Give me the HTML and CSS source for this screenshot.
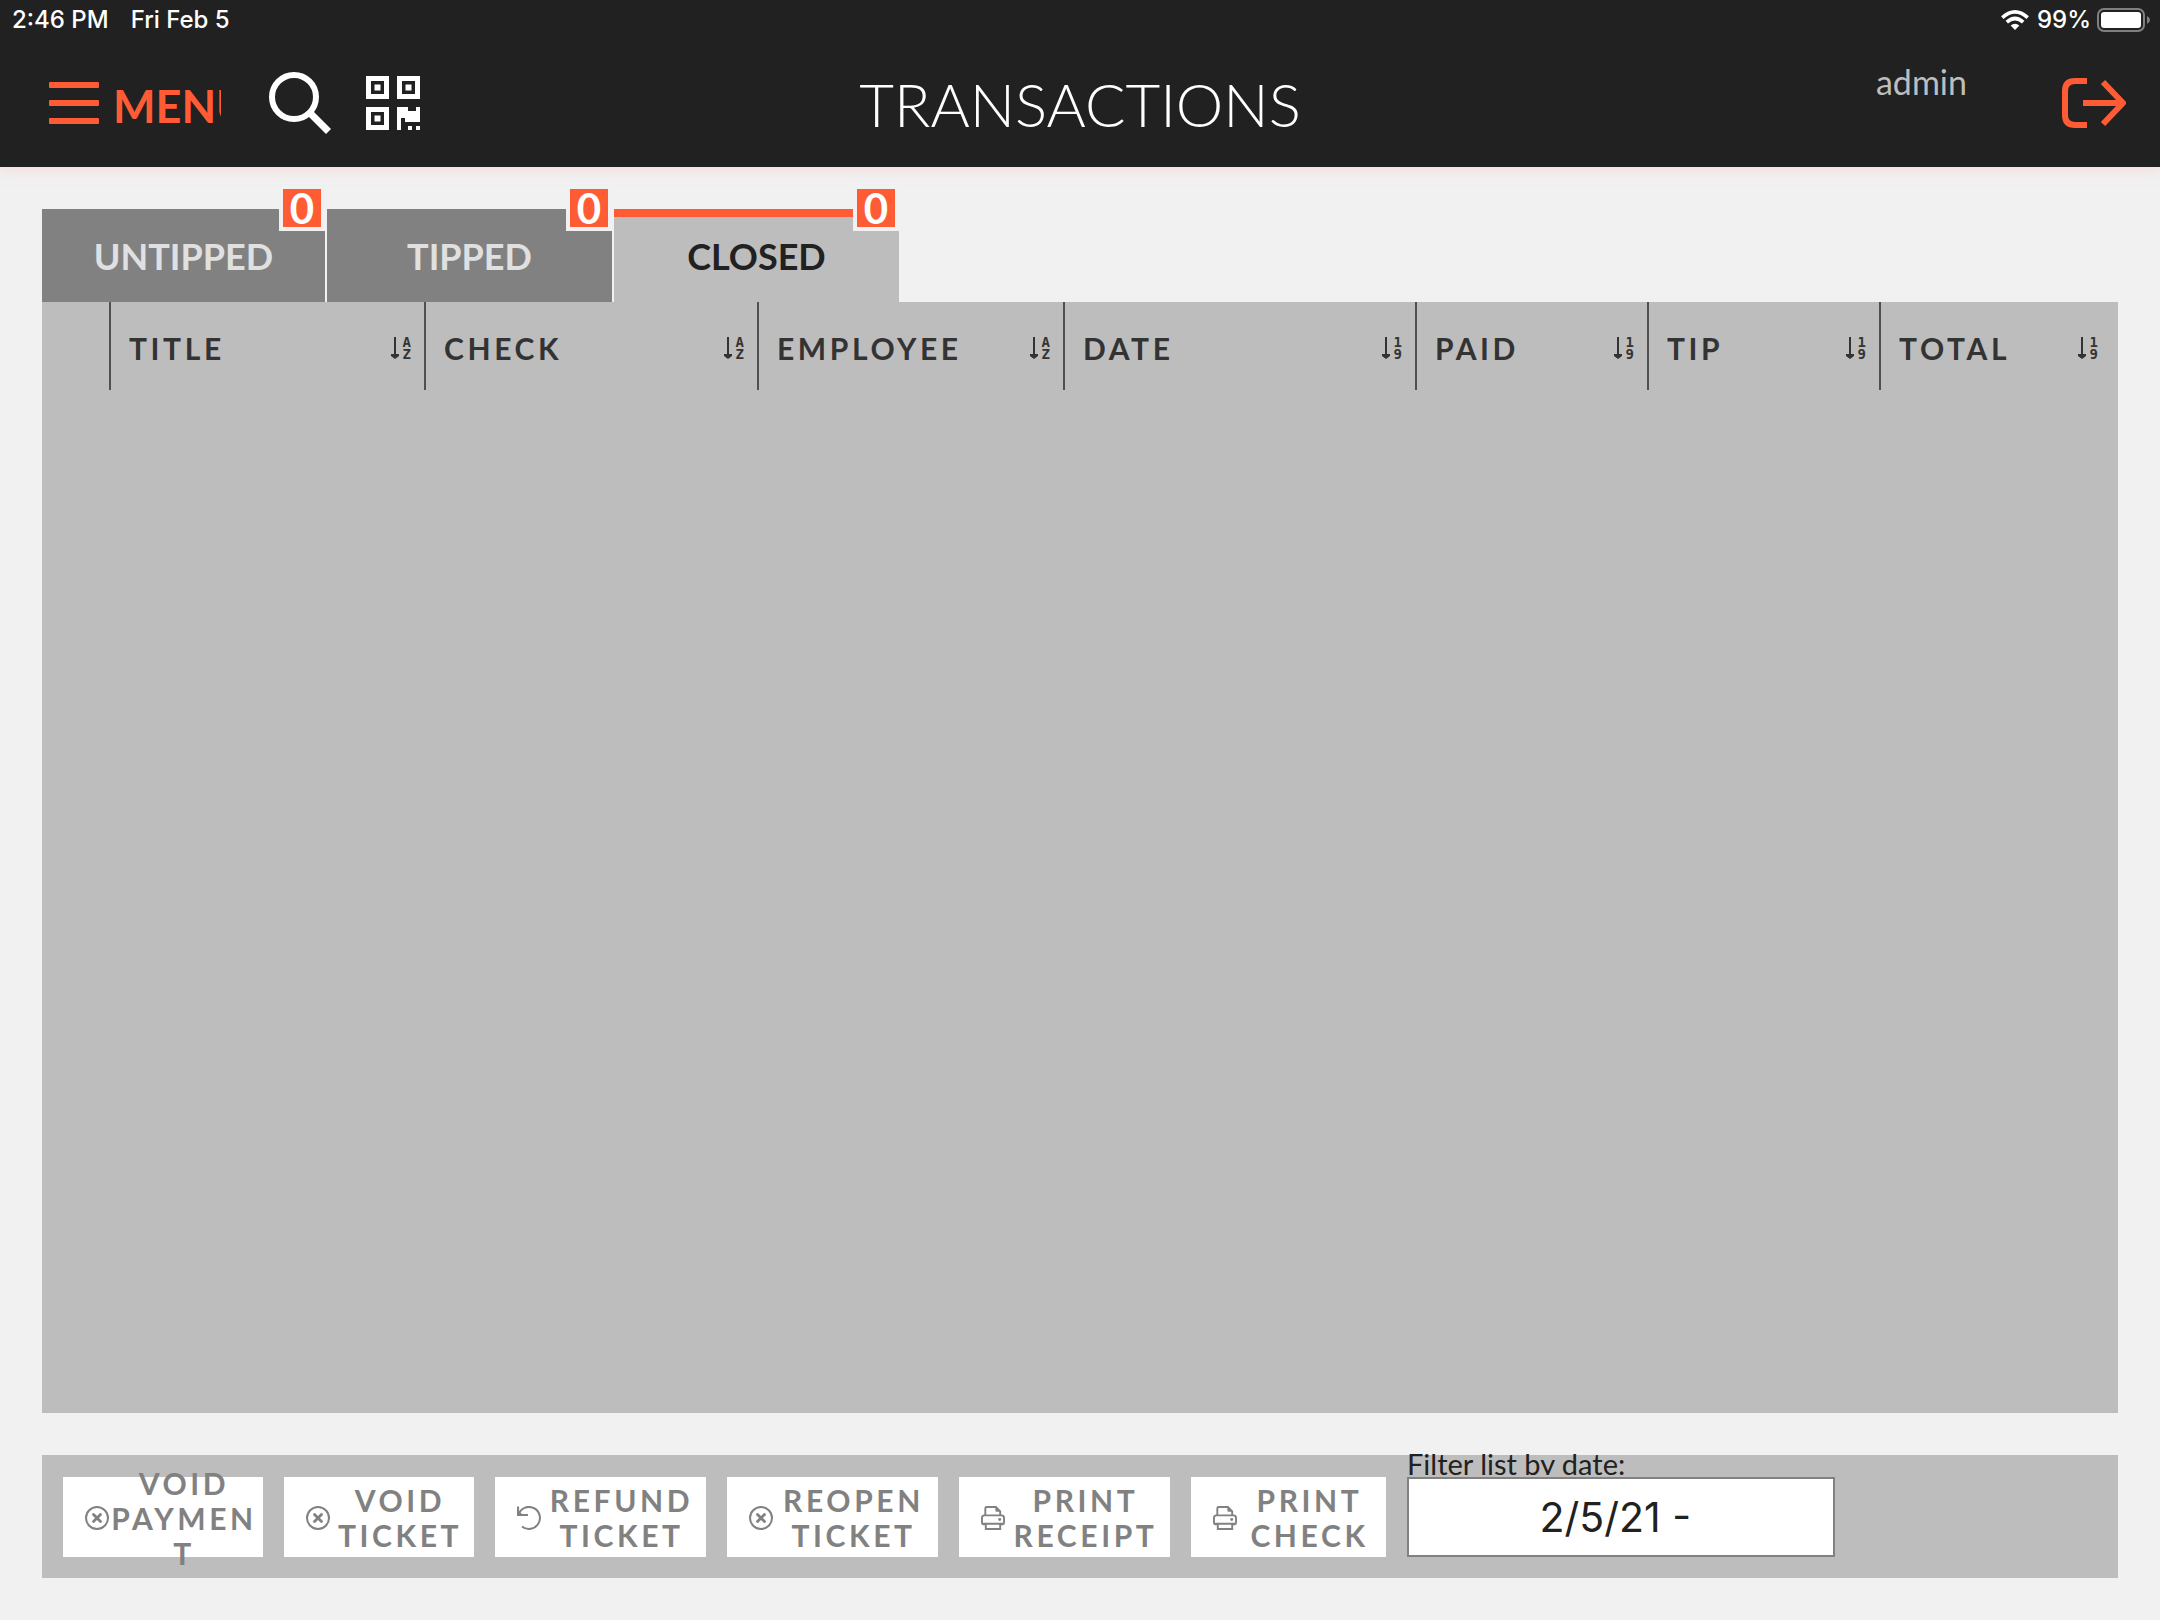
FILE: index.html
```html
<!DOCTYPE html>
<html lang="en">
<head>
<meta charset="utf-8">
<meta name="viewport" content="width=device-width, initial-scale=1">
<title>Transactions</title>
<link rel="stylesheet" href="styles.css">
</head>
<body>
<header class="header">
  <div class="status">
    <div class="status-group status-time"><span>2:46 PM</span><span>Fri Feb 5</span></div>
    <div class="status-group">
      <svg class="wifi" viewBox="0 0 28 20" aria-label="Wi-Fi">
        <g fill="none" stroke="#fff" stroke-width="3.600">
          <path d="M1.300 7.600Q14-3.800 26.700 7.600"/>
          <path d="M5.800 12.200Q14 4.800 22.200 12.200"/>
        </g>
        <path d="M9.600 15.500Q14 11.800 18.400 15.500L14 20z" fill="#fff"/>
      </svg>
      <span>99%</span>
      <svg class="battery" viewBox="0 0 53 24" aria-hidden="true">
        <rect x="1" y="1" width="46" height="22" rx="6" fill="none" stroke="#808080" stroke-width="2"/>
        <rect x="4" y="4" width="40" height="16" rx="3" fill="#fff"/>
        <path d="M50 8q3 1.500 3 4t-3 4z" fill="#808080"/>
      </svg>
    </div>
  </div>
  <nav class="nav">
    <div class="nav-left">
      <button class="menu" type="button">
        <svg class="menu-icon" viewBox="0 0 50 42" aria-hidden="true">
          <g fill="currentColor"><rect width="50" height="6" rx="1"/><rect y="18" width="50" height="6" rx="1"/><rect y="36" width="50" height="6" rx="1"/></g>
        </svg>
        <span>MENU</span>
      </button>
      <button class="icon-button" type="button" aria-label="Search">
        <svg class="search-icon" viewBox="0 0 62 62" aria-hidden="true">
          <g fill="none" stroke="currentColor"><circle cx="25" cy="25" r="22" stroke-width="6"/><path d="M41 41L59.500 59.500" stroke-width="7"/></g>
        </svg>
      </button>
      <button class="icon-button" type="button" aria-label="Scan code">
        <svg class="qr-icon" viewBox="0 0 54 54" aria-hidden="true">
          <path fill="currentColor" fill-rule="evenodd" d="M0 0h23v23H0zM5 5v13h13V5zM8.500 8.500h6v6h-6zM31 0h23v23H31zM36 5v13h13V5zM39.500 8.500h6v6h-6zM0 31h23v23H0zM5 36v13h13V36zM8.500 39.500h6v6h-6zM31 31h11v4h8v-4h4v15H39v-4h-4v12h-4zM42 50h4v4h-4zM50 50h4v4h-4z"/>
        </svg>
      </button>
    </div>
    <h1 class="title">TRANSACTIONS</h1>
    <div class="nav-right">
      <span class="user">admin</span>
      <button class="logout" type="button" aria-label="Log out">
        <svg class="logout-icon" viewBox="0 0 64 50" aria-hidden="true">
          <g fill="none" stroke="currentColor" stroke-width="6" stroke-linejoin="round">
            <path d="M25 3H13Q3 3 3 13V37Q3 47 13 47H25"/>
            <path d="M21 25H60M41 4L61 25L41 46"/>
          </g>
        </svg>
      </button>
    </div>
  </nav>
</header>

<main class="main">
  <div class="tabs" role="tablist">
    <button class="tab" type="button" role="tab" aria-selected="false">UNTIPPED<span class="badge">0</span></button>
    <button class="tab" type="button" role="tab" aria-selected="false">TIPPED<span class="badge">0</span></button>
    <button class="tab tab-active" type="button" role="tab" aria-selected="true">CLOSED<span class="badge">0</span></button>
  </div>

  <section class="panel">
    <table class="transactions">
      <colgroup>
        <col class="col-select"><col class="col-title"><col class="col-check"><col class="col-employee"><col class="col-date"><col class="col-amount"><col class="col-amount"><col class="col-amount">
      </colgroup>
      <thead>
        <tr>
          <td></td>
          <th scope="col"><button class="sort" type="button">TITLE<span class="sort-mark"><svg class="sort-arrow" viewBox="0 0 8 24"><path d="M3 1h2v17h3v2l-4 3-4-3v-2h3z" fill="currentColor"/></svg><span class="sort-range">A<br>Z</span></span></button></th>
          <th scope="col"><button class="sort" type="button">CHECK<span class="sort-mark"><svg class="sort-arrow" viewBox="0 0 8 24"><path d="M3 1h2v17h3v2l-4 3-4-3v-2h3z" fill="currentColor"/></svg><span class="sort-range">A<br>Z</span></span></button></th>
          <th scope="col"><button class="sort" type="button">EMPLOYEE<span class="sort-mark"><svg class="sort-arrow" viewBox="0 0 8 24"><path d="M3 1h2v17h3v2l-4 3-4-3v-2h3z" fill="currentColor"/></svg><span class="sort-range">A<br>Z</span></span></button></th>
          <th scope="col"><button class="sort" type="button">DATE<span class="sort-mark"><svg class="sort-arrow" viewBox="0 0 8 24"><path d="M3 1h2v17h3v2l-4 3-4-3v-2h3z" fill="currentColor"/></svg><span class="sort-range">1<br>9</span></span></button></th>
          <th scope="col"><button class="sort" type="button">PAID<span class="sort-mark"><svg class="sort-arrow" viewBox="0 0 8 24"><path d="M3 1h2v17h3v2l-4 3-4-3v-2h3z" fill="currentColor"/></svg><span class="sort-range">1<br>9</span></span></button></th>
          <th scope="col"><button class="sort" type="button">TIP<span class="sort-mark"><svg class="sort-arrow" viewBox="0 0 8 24"><path d="M3 1h2v17h3v2l-4 3-4-3v-2h3z" fill="currentColor"/></svg><span class="sort-range">1<br>9</span></span></button></th>
          <th scope="col"><button class="sort" type="button">TOTAL<span class="sort-mark"><svg class="sort-arrow" viewBox="0 0 8 24"><path d="M3 1h2v17h3v2l-4 3-4-3v-2h3z" fill="currentColor"/></svg><span class="sort-range">1<br>9</span></span></button></th>
        </tr>
      </thead>
    </table>
  </section>

  <section class="toolbar">
    <button class="action" type="button">
      <svg class="action-icon" viewBox="0 0 24 24" aria-hidden="true"><circle cx="12" cy="12" r="11" fill="none" stroke="currentColor" stroke-width="2"/><path d="M8.500 8.500l7 7M15.500 8.500l-7 7" fill="none" stroke="currentColor" stroke-width="2.800" stroke-linecap="round"/></svg>
      <span class="action-label">VOID PAYMENT</span>
    </button>
    <button class="action" type="button">
      <svg class="action-icon" viewBox="0 0 24 24" aria-hidden="true"><circle cx="12" cy="12" r="11" fill="none" stroke="currentColor" stroke-width="2"/><path d="M8.500 8.500l7 7M15.500 8.500l-7 7" fill="none" stroke="currentColor" stroke-width="2.800" stroke-linecap="round"/></svg>
      <span class="action-label">VOID TICKET</span>
    </button>
    <button class="action" type="button">
      <svg class="action-icon" viewBox="0 0 24 24" aria-hidden="true"><path d="M1.500 8.500A11 11 0 1 1 5 20.500" fill="none" stroke="currentColor" stroke-width="2"/><path d="M1 .5v8.500H11" fill="none" stroke="currentColor" stroke-width="2.200"/><path d="M1 9.500V4l4.500 4.500z" fill="currentColor"/></svg>
      <span class="action-label">REFUND TICKET</span>
    </button>
    <button class="action" type="button">
      <svg class="action-icon" viewBox="0 0 24 24" aria-hidden="true"><circle cx="12" cy="12" r="11" fill="none" stroke="currentColor" stroke-width="2"/><path d="M8.500 8.500l7 7M15.500 8.500l-7 7" fill="none" stroke="currentColor" stroke-width="2.800" stroke-linecap="round"/></svg>
      <span class="action-label">REOPEN TICKET</span>
    </button>
    <button class="action" type="button">
      <svg class="action-icon" viewBox="0 0 25 25" aria-hidden="true"><g fill="none" stroke="currentColor" stroke-width="2"><path d="M4.500 9.500V2.500Q4.500 1 6 1H15.500L20 5.500V9.500"/><path d="M5 19H2.500Q1 19 1 17.500V12.500Q1 9.800 3.500 9.800H21.500Q24 9.800 24 12.500V17.500Q24 19 22.500 19H20"/><path d="M2 18.500H23M5 18.500V24H20V18.500"/></g><path d="M15 1l5 5h-4q-1 0-1-1z" fill="currentColor"/><circle cx="19.500" cy="14" r="1.500" fill="currentColor"/></svg>
      <span class="action-label">PRINT RECEIPT</span>
    </button>
    <button class="action" type="button">
      <svg class="action-icon" viewBox="0 0 25 25" aria-hidden="true"><g fill="none" stroke="currentColor" stroke-width="2"><path d="M4.500 9.500V2.500Q4.500 1 6 1H15.500L20 5.500V9.500"/><path d="M5 19H2.500Q1 19 1 17.500V12.500Q1 9.800 3.500 9.800H21.500Q24 9.800 24 12.500V17.500Q24 19 22.500 19H20"/><path d="M2 18.500H23M5 18.500V24H20V18.500"/></g><path d="M15 1l5 5h-4q-1 0-1-1z" fill="currentColor"/><circle cx="19.500" cy="14" r="1.500" fill="currentColor"/></svg>
      <span class="action-label">PRINT CHECK</span>
    </button>
    <div class="filter">
      <label class="filter-label" for="date-range">Filter list by date:</label>
      <input class="filter-input" id="date-range" type="text" value="2/5/21 - ">
    </div>
  </section>
</main>
</body>
</html>
```
FILE: styles.css
```css
:root {
  --ink: #212121;
  --page: #f1f1f1;
  --panel: #bdbdbd;
  --muted: #818181;
  --accent: #ff5c35;
}

* { box-sizing: border-box; }

body {
  display: flex;
  flex-direction: column;
  min-height: 100vh;
  margin: 0;
  background: var(--page);
  color: var(--ink);
  font-family: Lato, sans-serif;
}

button {
  margin: 0;
  padding: 0;
  border: 0;
  background: none;
  color: inherit;
  font: inherit;
  cursor: pointer;
}

svg { display: block; flex: none; }

/* Header */
.header {
  background: var(--ink);
  color: #fff;
  box-shadow: 0 0 14px rgba(255, 180, 180, 0.5);
}

.status {
  display: flex;
  justify-content: space-between;
  height: 40px;
  padding: 0 10px 0 12px;
  font: 500 24px/40px Inter, sans-serif;
}

.status-group { display: flex; align-items: center; gap: 6px; }
.status-time { gap: 22px; }
.wifi { width: 28px; height: 20px; margin-right: 2px; }
.battery { width: 53px; height: 24px; }

.nav {
  display: grid;
  grid-template-columns: 1fr auto 1fr;
  align-items: center;
  height: 127px;
  padding: 0 34px 2px;
}

.nav-left {
  display: flex;
  align-items: center;
  padding-left: 15px;
}

.menu {
  display: flex;
  align-items: center;
  gap: 14px;
  width: 172px;
  margin-right: 48px;
  overflow: hidden;
  color: var(--accent);
  font-size: 45px;
  font-weight: 700;
  line-height: 60px;
}

.menu span { padding-top: 6px; }
.menu-icon { width: 50px; height: 42px; }
.icon-button { margin-right: 35px; }
.search-icon { width: 62px; height: 62px; }
.qr-icon { width: 54px; height: 54px; }

.title {
  margin: 0;
  padding-top: 2px;
  font-size: 60px;
  font-weight: 300;
  line-height: 72px;
}

.nav-right {
  display: flex;
  justify-content: flex-end;
  align-items: center;
  gap: 95px;
}

.user {
  padding-bottom: 42px;
  color: var(--panel);
  font-size: 34px;
  line-height: 40px;
}

.logout { color: var(--accent); }
.logout-icon { width: 64px; height: 50px; }

/* Content */
.main {
  display: flex;
  flex: 1;
  flex-direction: column;
  padding: 42px;
}

.tabs {
  display: grid;
  grid-template-columns: 283px 285px 285px;
  gap: 2px;
}

.tab {
  position: relative;
  height: 93px;
  background: var(--muted);
  color: #e0e0e0;
  font-size: 36px;
  font-weight: 700;
}

.tab-active {
  background: linear-gradient(var(--accent) 8px, var(--panel) 8px);
  color: var(--ink);
}

.badge {
  position: absolute;
  top: -24px;
  right: 0;
  width: 46px;
  height: 46px;
  border: 4px solid var(--page);
  background: var(--accent);
  color: #fff;
  font-size: 42px;
  line-height: 38px;
}

.panel {
  flex: 1;
  padding-right: 7px;
  background: var(--panel);
}

.transactions {
  width: 100%;
  table-layout: fixed;
  border-collapse: separate;
  border-spacing: 0;
}

.transactions td,
.transactions th {
  height: 88px;
  padding: 0;
}

.transactions th { border-left: 2px solid #505050; }

.col-select { width: 67px; }
.col-title { width: 315px; }
.col-check { width: 333px; }
.col-employee { width: 306px; }
.col-date { width: 352px; }
.col-amount { width: 232px; }

.sort {
  display: flex;
  align-items: center;
  justify-content: space-between;
  width: 100%;
  height: 88px;
  padding: 4px 13px 0 18px;
  color: #333;
  font-size: 30px;
  font-weight: 700;
  letter-spacing: 0.12em;
}

.sort-mark { display: flex; align-items: center; gap: 4px; }
.sort-arrow { width: 8px; height: 24px; }

.sort-range {
  font: 700 14px/12px "DejaVu Sans Mono", monospace;
  letter-spacing: 0;
  text-align: center;
}

/* Bottom toolbar */
.toolbar {
  display: grid;
  grid-template-columns: 200fr 190fr 211fr 211fr 211fr 195fr 428fr 241fr;
  gap: 21px;
  margin-top: 42px;
  padding: 22px 21px 21px;
  background: var(--panel);
}

.action {
  display: flex;
  align-items: center;
  min-width: 0;
  height: 80px;
  padding: 2px 4px 0 22px;
  background: #fff;
  color: var(--muted);
  font-size: 30px;
  font-weight: 700;
  line-height: 35px;
  letter-spacing: 0.12em;
}

.action-icon { width: 24px; height: 24px; }

.action-label {
  flex: 1;
  min-width: 0;
  overflow-wrap: anywhere;
  text-align: center;
}

.filter {
  display: flex;
  flex-direction: column;
  min-width: 0;
  height: 80px;
}

.filter-label {
  flex: none;
  height: 22px;
  margin: -24px 0 2px;
  overflow: hidden;
  font-size: 29px;
  line-height: 22px;
  white-space: nowrap;
}

.filter-input {
  width: 100%;
  height: 80px;
  padding: 0;
  border: 2px solid var(--muted);
  border-radius: 0;
  background: #fff;
  color: var(--ink);
  font: 400 41px Inter, sans-serif;
  text-align: center;
  white-space: pre;
}
```
